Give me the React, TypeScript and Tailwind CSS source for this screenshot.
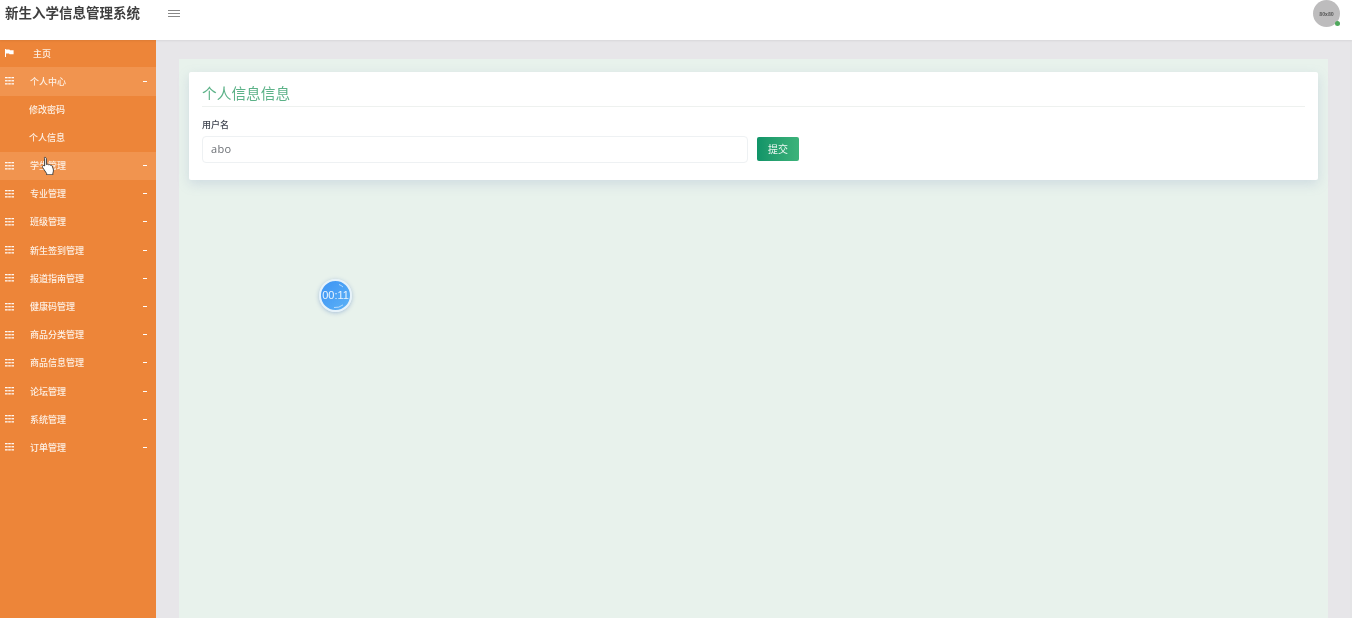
import React from "react";

const font = { fontFamily: '"Noto Sans CJK SC", "Liberation Sans", sans-serif' };

function Grid() {
  return (
    <svg width="9" height="8" viewBox="0 0 9 8" className="shrink-0" fill="#fff" opacity="0.95">
      {[0, 3.1, 6.2].map((y) =>
        [0, 3.2, 6.4].map((x) => <rect key={`${x}-${y}`} x={x} y={y} width={x === 0 ? 2.7 : 2.6} height="1.3" />)
      )}
    </svg>
  );
}

function MenuRow({ label, active, tall }: { label: string; active?: boolean; tall?: boolean }) {
  return (
    <div className={`flex items-center pb-[1px] pl-[5px] pr-[9px] ${tall ? "h-[29px]" : "h-[28.2px]"} ${active ? "bg-[#f1944f]" : ""}`}>
      <Grid />
      <span className="ml-[16px] flex-1 text-[9px] font-medium leading-none text-[#fdf0e4]">{label}</span>
      <span className="h-px w-[4px] bg-white" />
    </div>
  );
}

function SubRow({ label }: { label: string }) {
  return (
    <div className="flex h-[28px] items-center pb-[2px] pl-[29px] text-[9px] font-medium leading-none text-[#fdf0e4]">{label}</div>
  );
}

const rest = ["专业管理", "班级管理", "新生签到管理", "报道指南管理", "健康码管理", "商品分类管理", "商品信息管理", "论坛管理", "系统管理", "订单管理"];

export default function App() {
  return (
    <div className="relative flex h-[618px] w-[1352px] flex-col overflow-hidden bg-[#e7e6e9] blur-[0.35px]" style={font}>
      <header className="z-10 flex h-[40px] shrink-0 items-start bg-white shadow-[0_1px_2px_rgba(0,0,0,0.07)]">
        <h1 className="ml-[5px] mt-[2px] text-[13.5px] font-bold leading-[20px] text-[#3f3f3f]">新生入学信息管理系统</h1>
        <div className="ml-[28px] mt-[10px] flex w-[12px] flex-col gap-[2px]">
          <span className="h-px bg-[#888]" />
          <span className="h-px bg-[#888]" />
          <span className="h-px bg-[#888]" />
        </div>
        <div className="relative ml-auto mr-[12px] flex h-[27px] w-[27px] items-center justify-center rounded-full bg-[#bdbcbd]">
          <span className="text-[5px] font-bold leading-none text-[#555]">80x80</span>
          <span className="absolute bottom-[1px] right-0 h-[5px] w-[5px] rounded-full bg-[#4fa85c]" />
        </div>
      </header>

      <div className="flex min-h-0 flex-1">
        <aside className="w-[156px] shrink-0 bg-[#ed8539]">
          <div className="flex h-[27px] items-center pb-[1px] pl-[5px]">
            <svg width="9" height="8" viewBox="0 0 9 8" fill="#fff" className="shrink-0">
              <path d="M0 0h1v8H0zM1 0.5h3.4l0.6 0.8H8.6V5.2H4.6L4 4.4H1z" />
            </svg>
            <span className="ml-[19px] text-[9px] font-medium leading-none text-[#fdf0e4]">主页</span>
          </div>
          <MenuRow label="个人中心" active tall />
          <SubRow label="修改密码" />
          <SubRow label="个人信息" />
          <MenuRow label="学生管理" active />
          {rest.map((r) => (
            <MenuRow key={r} label={r} />
          ))}
        </aside>

        <main className="flex min-w-0 flex-1 pl-[23px] pr-[24px] pt-[19px]">
          <div className="flex-1 bg-[#e8f2ec] px-[10px] pt-[13px]">
            <section className="flex h-[108px] flex-col rounded-[2px] bg-white px-[13px] shadow-[0_4px_12px_rgba(130,150,190,0.25)]">
              <h2 className="flex h-[35px] items-center border-b border-[#eef1ef] pt-[8px] text-[14.7px] font-normal leading-none text-[#5cb288]">个人信息信息</h2>
              <label className="mt-[13px] text-[9px] font-medium leading-none text-[#3f4450]">用户名</label>
              <div className="mt-[7px] flex items-start">
                <div className="flex h-[27px] w-[546px] items-center rounded-[4px] border border-[#eef1f3] pl-[8px] text-[11px] tracking-[0.3px] text-[#6c7075]" style={{ fontFamily: '"Open Sans", sans-serif' }}>abo</div>
                <button className="ml-[9px] mt-[1px] h-[24px] w-[42px] rounded-[2px] bg-gradient-to-r from-[#0f9468] to-[#3cb37a] text-[10px] leading-none text-[#eef8f3]">提交</button>
              </div>
            </section>
          </div>
        </main>
      </div>

      <div className="absolute right-0 top-0 h-full w-[2px] bg-[#e4e4e6]" />

      <div className="absolute left-[319px] top-[279px] flex h-[33px] w-[33px] items-center justify-center rounded-full border-2 border-[#e6f2fa] bg-gradient-to-br from-[#3c93f4] to-[#5db2f6] shadow-[0_1px_4px_rgba(90,130,190,0.45)]">
        <svg className="absolute inset-0" width="29" height="29" viewBox="0 0 29 29" fill="none" stroke="#cfe6fd" strokeWidth="0.8">
          <path d="M18 3.5a11.5 11.5 0 0 1 4 2.5" />
          <path d="M13 26.5a12 12 0 0 0 9-2.6" />
        </svg>
        <span className="relative text-[11px] leading-none text-[#e9f4fe]" style={{ fontFamily: '"Liberation Sans", sans-serif' }}>00:11</span>
      </div>

      <svg className="absolute left-[41px] top-[156px]" width="15" height="19" viewBox="0 0 13 17">
        <path d="M3.2 1.2c.9 0 1.4.6 1.4 1.4v5l.6-.3c.6-.1 1.1.1 1.3.5.6-.3 1.3-.1 1.6.5.7-.3 1.4 0 1.7.6l.9 2.7c.4 1.3.2 2.6-.3 3.7v1.5H4.8v-1.2L1.3 10.4c-.4-.6-.3-1.3.2-1.7.5-.4 1.2-.3 1.6.1l-.1.1V2.6c0-.8-.6-1.4.2-1.4z" fill="#fff" stroke="#333" strokeWidth="0.8" strokeLinejoin="round" />
      </svg>
    </div>
  );
}
